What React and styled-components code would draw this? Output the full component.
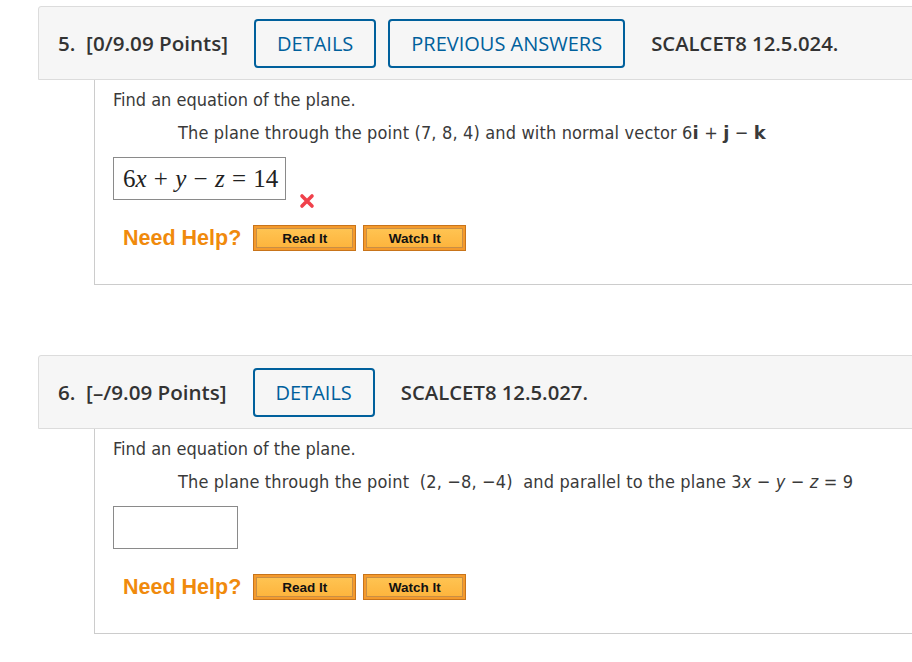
import styled, { createGlobalStyle } from 'styled-components';

const GlobalStyle = createGlobalStyle`
  html, body {
    margin: 0;
    padding: 0;
    background: #fff;
  }
  body {
    overflow: hidden;
  }
`;

const Page = styled.div`
  width: 912px;
  overflow: hidden;
  padding: 6px 0 0 38px;
  box-sizing: border-box;
`;

const Question = styled.section`
  width: 900px;
  margin-bottom: 70px;
`;

const Header = styled.div`
  display: flex;
  align-items: center;
  height: 74px;
  box-sizing: border-box;
  padding-left: 19px;
  background: #f6f6f6;
  border: 1px solid #dcdcdc;
  border-radius: 3px 0 0 0;
  font-family: "Open Sans", sans-serif;
`;

const Label = styled.div`
  font-size: 20.6px;
  font-weight: 600;
  color: #333;
  white-space: pre;
  margin-right: 26px;
`;

const HeaderButton = styled.div`
  height: 49px;
  box-sizing: border-box;
  display: flex;
  align-items: center;
  padding: 0 21px;
  border: 2px solid #00609c;
  border-radius: 4px;
  color: #00609c;
  font-size: 20px;
  margin-right: ${({ $gap }) => $gap}px;
`;

const Reference = styled.div`
  font-size: 20.3px;
  font-weight: 600;
  color: #333;
`;

const Body = styled.div`
  margin-left: 56px;
  border-left: 1px solid #cccccc;
  border-bottom: 1px solid #cccccc;
  padding: 10px 0 33px 18px;
  font-family: "DejaVu Sans Condensed", "DejaVu Sans", sans-serif;
  font-size: 18px;
  color: #3a3a3a;
`;

const Prompt = styled.p`
  margin: 0;
  line-height: 20px;
`;

const Detail = styled.p`
  margin: 13px 0 0 65px;
  line-height: 20px;
  letter-spacing: 0.15px;
  white-space: pre;
`;

const AnswerRow = styled.div`
  display: flex;
  align-items: flex-end;
  margin-top: 14px;
`;

const AnswerBox = styled.div`
  box-sizing: border-box;
  height: 43px;
  width: ${({ $width }) => $width}px;
  border: 1px solid #8a8a8a;
  padding: 0 9px;
  display: flex;
  align-items: center;
  font-family: "Liberation Serif", "DejaVu Serif", serif;
  font-size: 25px;
  word-spacing: 1px;
  color: #222;
  white-space: pre;
`;

const Wrong = styled.svg`
  margin: 0 0 -9px 13px;
`;

const HelpRow = styled.div`
  display: flex;
  align-items: center;
  margin-top: 25px;
  padding-left: 10px;
`;

const HelpLabel = styled.span`
  font-family: "Liberation Sans", Arial, sans-serif;
  font-weight: bold;
  font-size: 21.5px;
  color: #f08a0c;
  margin-right: 12px;
`;

const HelpButton = styled.div`
  width: 103px;
  height: 26px;
  box-sizing: border-box;
  border: 1px solid #c8741a;
  background: linear-gradient(#ffc655, #fdb23a);
  box-shadow: inset 0 0 0 2px #f49a2c, inset 0 0 0 3px #c98e45;
  display: flex;
  align-items: center;
  justify-content: center;
  font-family: "Liberation Sans", Arial, sans-serif;
  font-weight: bold;
  font-size: 13.5px;
  color: #111;
  margin-right: 7px;
`;

const Vec = styled.b`
  font-family: "DejaVu Sans", sans-serif;
  font-weight: bold;
`;

const WrongMark = () => (
  <Wrong width="16" height="16" viewBox="0 0 16 16">
    <path d="M3 3 L13 13 M13 3 L3 13" stroke="#f0414b" strokeWidth="3.6" strokeLinecap="round" />
  </Wrong>
);

const Help = () => (
  <HelpRow>
    <HelpLabel>Need Help?</HelpLabel>
    <HelpButton>Read It</HelpButton>
    <HelpButton>Watch It</HelpButton>
  </HelpRow>
);

const App = () => (
  <>
    <GlobalStyle />
    <Page>
      <Question>
        <Header>
          <Label>{'5.  [0/9.09 Points]'}</Label>
          <HeaderButton $gap={12}>DETAILS</HeaderButton>
          <HeaderButton $gap={26}>PREVIOUS ANSWERS</HeaderButton>
          <Reference>SCALCET8 12.5.024.</Reference>
        </Header>
        <Body>
          <Prompt>Find an equation of the plane.</Prompt>
          <Detail>
            The plane through the point (7, 8, 4) and with normal vector 6<Vec>i</Vec> + <Vec>j</Vec> − <Vec>k</Vec>
          </Detail>
          <AnswerRow>
            <AnswerBox $width={173}>
              6<i>x</i> + <i>y</i> − <i>z</i> = 14
            </AnswerBox>
            <WrongMark />
          </AnswerRow>
          <Help />
        </Body>
      </Question>
      <Question>
        <Header>
          <Label>{'6.  [–/9.09 Points]'}</Label>
          <HeaderButton $gap={26}>DETAILS</HeaderButton>
          <Reference>SCALCET8 12.5.027.</Reference>
        </Header>
        <Body>
          <Prompt>Find an equation of the plane.</Prompt>
          <Detail>
            {'The plane through the point  (2, −8, −4)  and parallel to the plane 3'}<i>x</i> − <i>y</i> − <i>z</i> = 9
          </Detail>
          <AnswerRow>
            <AnswerBox $width={125} />
          </AnswerRow>
          <Help />
        </Body>
      </Question>
    </Page>
  </>
);

export default App;
